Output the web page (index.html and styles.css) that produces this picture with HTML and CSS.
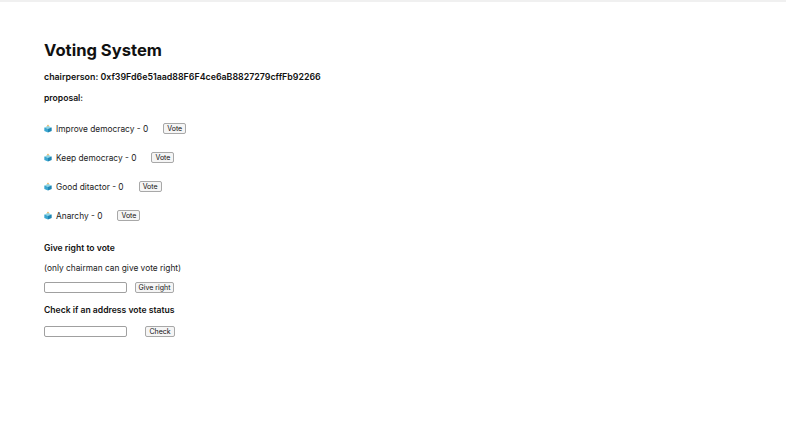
FILE: index.html
```html
<!DOCTYPE html>
<html lang="en">
<head>
<meta charset="utf-8">
<title>Voting System</title>
<link rel="stylesheet" href="styles.css">
</head>
<body>
<div class="topline"></div>
<main class="app">
  <h1 class="title">Voting System</h1>
  <p class="label address">chairperson: 0xf39Fd6e51aad88F6F4ce6aB8827279cffFb92266</p>
  <p class="label proposal">proposal:</p>
  <ul class="proposals">
    <li class="row">
      <svg class="icon" viewBox="0 0 10 10"><path class="i-o" d="M5 0 6.8 2.8H3.2z"/><path class="i-t" d="M.4 3.6 5 2 9.6 3.6 5 5.4z"/><path class="i-l" d="M.4 3.6 5 5.4V10L.4 8.2z"/><path class="i-r" d="M9.6 3.6 5 5.4V10L9.6 8.2z"/></svg>
      <span class="name">Improve democracy - 0</span><button class="btn">Vote</button>
    </li>
    <li class="row">
      <svg class="icon" viewBox="0 0 10 10"><path class="i-o" d="M5 0 6.8 2.8H3.2z"/><path class="i-t" d="M.4 3.6 5 2 9.6 3.6 5 5.4z"/><path class="i-l" d="M.4 3.6 5 5.4V10L.4 8.2z"/><path class="i-r" d="M9.6 3.6 5 5.4V10L9.6 8.2z"/></svg>
      <span class="name">Keep democracy - 0</span><button class="btn">Vote</button>
    </li>
    <li class="row">
      <svg class="icon" viewBox="0 0 10 10"><path class="i-o" d="M5 0 6.8 2.8H3.2z"/><path class="i-t" d="M.4 3.6 5 2 9.6 3.6 5 5.4z"/><path class="i-l" d="M.4 3.6 5 5.4V10L.4 8.2z"/><path class="i-r" d="M9.6 3.6 5 5.4V10L9.6 8.2z"/></svg>
      <span class="name">Good ditactor - 0</span><button class="btn">Vote</button>
    </li>
    <li class="row">
      <svg class="icon" viewBox="0 0 10 10"><path class="i-o" d="M5 0 6.8 2.8H3.2z"/><path class="i-t" d="M.4 3.6 5 2 9.6 3.6 5 5.4z"/><path class="i-l" d="M.4 3.6 5 5.4V10L.4 8.2z"/><path class="i-r" d="M9.6 3.6 5 5.4V10L9.6 8.2z"/></svg>
      <span class="name">Anarchy - 0</span><button class="btn">Vote</button>
    </li>
  </ul>
  <p class="label right-title">Give right to vote</p>
  <p class="note">(only chairman can give vote right)</p>
  <div class="form-row"><input class="field" type="text"><button class="btn give">Give right</button></div>
  <p class="label check-title">Check if an address vote status</p>
  <div class="form-row"><input class="field" type="text"><button class="btn check">Check</button></div>
</main>
</body>
</html>
```
FILE: styles.css
```css
* { box-sizing: border-box; }
html, body { margin: 0; padding: 0; background: #fff; }
body { width: 786px; height: 432px; overflow: hidden; font-family: Inter, "Liberation Sans", sans-serif; color: #111; }
.topline { height: 2px; background: #f0f0f0; }
.app { padding: 37px 0 0 44px; }
.title { margin: 0; font-size: 16.6px; line-height: 22px; font-weight: 700; }
.label { margin: 0; font-size: 8.6px; line-height: 12px; font-weight: 600; }
.address { margin-top: 10px; font-size: 8.84px; }
.proposal { margin-top: 9px; }
.proposals { list-style: none; margin: 18px 0 0; padding: 0; display: flex; flex-direction: column; gap: 16px; }
.row { display: flex; align-items: center; height: 13px; font-size: 8.35px; color: #222; }
.icon { width: 8px; height: 9px; margin-right: 4px; flex: none; }
.i-o { fill: #e9a23b; }
.i-t { fill: #8fd6e6; }
.i-l { fill: #3aa6cf; }
.i-r { fill: #1f86b4; }
.btn { margin: 0 0 0 15px; padding: 0; height: 11px; width: 23px; border: 1px solid #a8a8a8; border-radius: 2px; background: #f5f5f5; font: 400 7px/9px Inter, "Liberation Sans", sans-serif; color: #111; }
.right-title { margin-top: 20px; }
.note { margin: 8px 0 0; font-size: 8.35px; line-height: 12px; color: #222; }
.form-row { display: flex; align-items: center; height: 12px; margin-top: 7px; }
.field { width: 83px; height: 11px; padding: 0; border: 1px solid #a0a0a0; border-radius: 2px; background: #fff; }
.give { width: 39px; margin-left: 8px; }
.check { width: 30px; margin-left: 18px; }
.check-title { margin-top: 11px; }
.check-title + .form-row { margin-top: 9px; }
```
